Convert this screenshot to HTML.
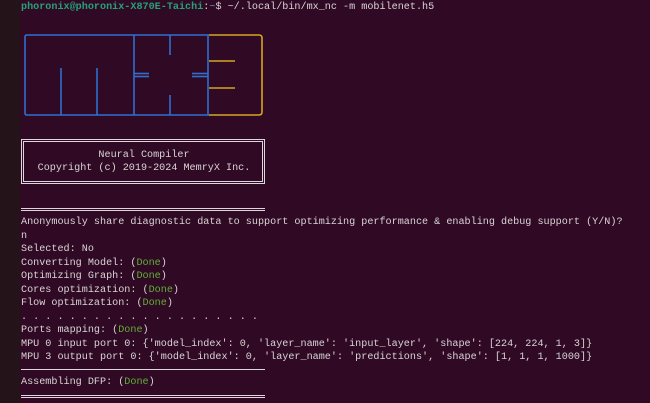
<!DOCTYPE html>
<html><head><style>
html,body{margin:0;padding:0;width:650px;height:403px;overflow:hidden;background:#300a24;}
.strip{position:absolute;left:0;top:0;width:20px;height:403px;background:#241419;}
.t{position:absolute;left:21px;font-family:"Liberation Mono",monospace;font-size:10.15px;color:#d8d4d6;white-space:pre;line-height:12px;}
.g{color:#5fb035;}
.p{color:#26a07a;font-weight:bold;}
.rule{position:absolute;left:21px;width:244px;height:1px;border-top:1px solid #ddd6dc;border-bottom:1px solid #ddd6dc;}
</style></head><body>
<div class="strip"></div>
<div class="t" style="top:2px"><span class="p">phoronix@phoronix-X870E-Taichi</span>:<span style="color:#6a8ccf">~</span>$ ~/.local/bin/mx_nc -m mobilenet.h5</div>
<svg style="position:absolute;left:0;top:0" width="650" height="130">
<g fill="none" stroke="#2e6fd0" stroke-width="1.6">
<path d="M209 35 H27 Q25 35 25 37 V113 Q25 115 27 115 H209"/>
<line x1="61" y1="68" x2="61" y2="115"/>
<line x1="97" y1="68" x2="97" y2="115"/>
<line x1="134" y1="35" x2="134" y2="115"/>
<line x1="170" y1="35" x2="170" y2="55"/>
<line x1="170" y1="95" x2="170" y2="115"/>
<line x1="208" y1="35" x2="208" y2="115"/>
<line x1="134" y1="73.5" x2="149" y2="73.5"/>
<line x1="134" y1="76.5" x2="149" y2="76.5"/>
<line x1="192" y1="73.5" x2="208" y2="73.5"/>
<line x1="192" y1="76.5" x2="208" y2="76.5"/>
</g>
<g fill="none" stroke="#d4a520" stroke-width="1.6">
<path d="M209 35 H259 Q262 35 262 38 V112 Q262 115 259 115 H209"/>
<line x1="209" y1="61" x2="235" y2="61"/>
<line x1="209" y1="88" x2="235" y2="88"/>
</g>
</svg>
<div style="position:absolute;left:23px;top:141px;width:238px;height:39px;border:1px solid #ddd6dc;outline:1px solid #ddd6dc;outline-offset:1px;"></div>
<div class="t" style="top:149px;left:23px;width:242px;text-align:center;line-height:13px">Neural Compiler
Copyright (c) 2019-2024 MemryX Inc.</div>
<div class="rule" style="top:208px"></div>
<div class="t" style="top:216px;line-height:13.5px">Anonymously share diagnostic data to support optimizing performance &amp; enabling debug support (Y/N)?
n
Selected: No
Converting Model: (<span class="g">Done</span>)
Optimizing Graph: (<span class="g">Done</span>)
Cores optimization: (<span class="g">Done</span>)
Flow optimization: (<span class="g">Done</span>)
. . . . . . . . . . . . . . . . . . . .
Ports mapping: (<span class="g">Done</span>)
MPU 0 input port 0: {'model_index': 0, 'layer_name': 'input_layer', 'shape': [224, 224, 1, 3]}
MPU 3 output port 0: {'model_index': 0, 'layer_name': 'predictions', 'shape': [1, 1, 1, 1000]}</div>
<div class="rule" style="top:369px;height:0;border-bottom:none"></div>
<div class="t" style="top:377px">Assembling DFP: (<span class="g">Done</span>)</div>
<div class="rule" style="top:395px"></div>
</body></html>
